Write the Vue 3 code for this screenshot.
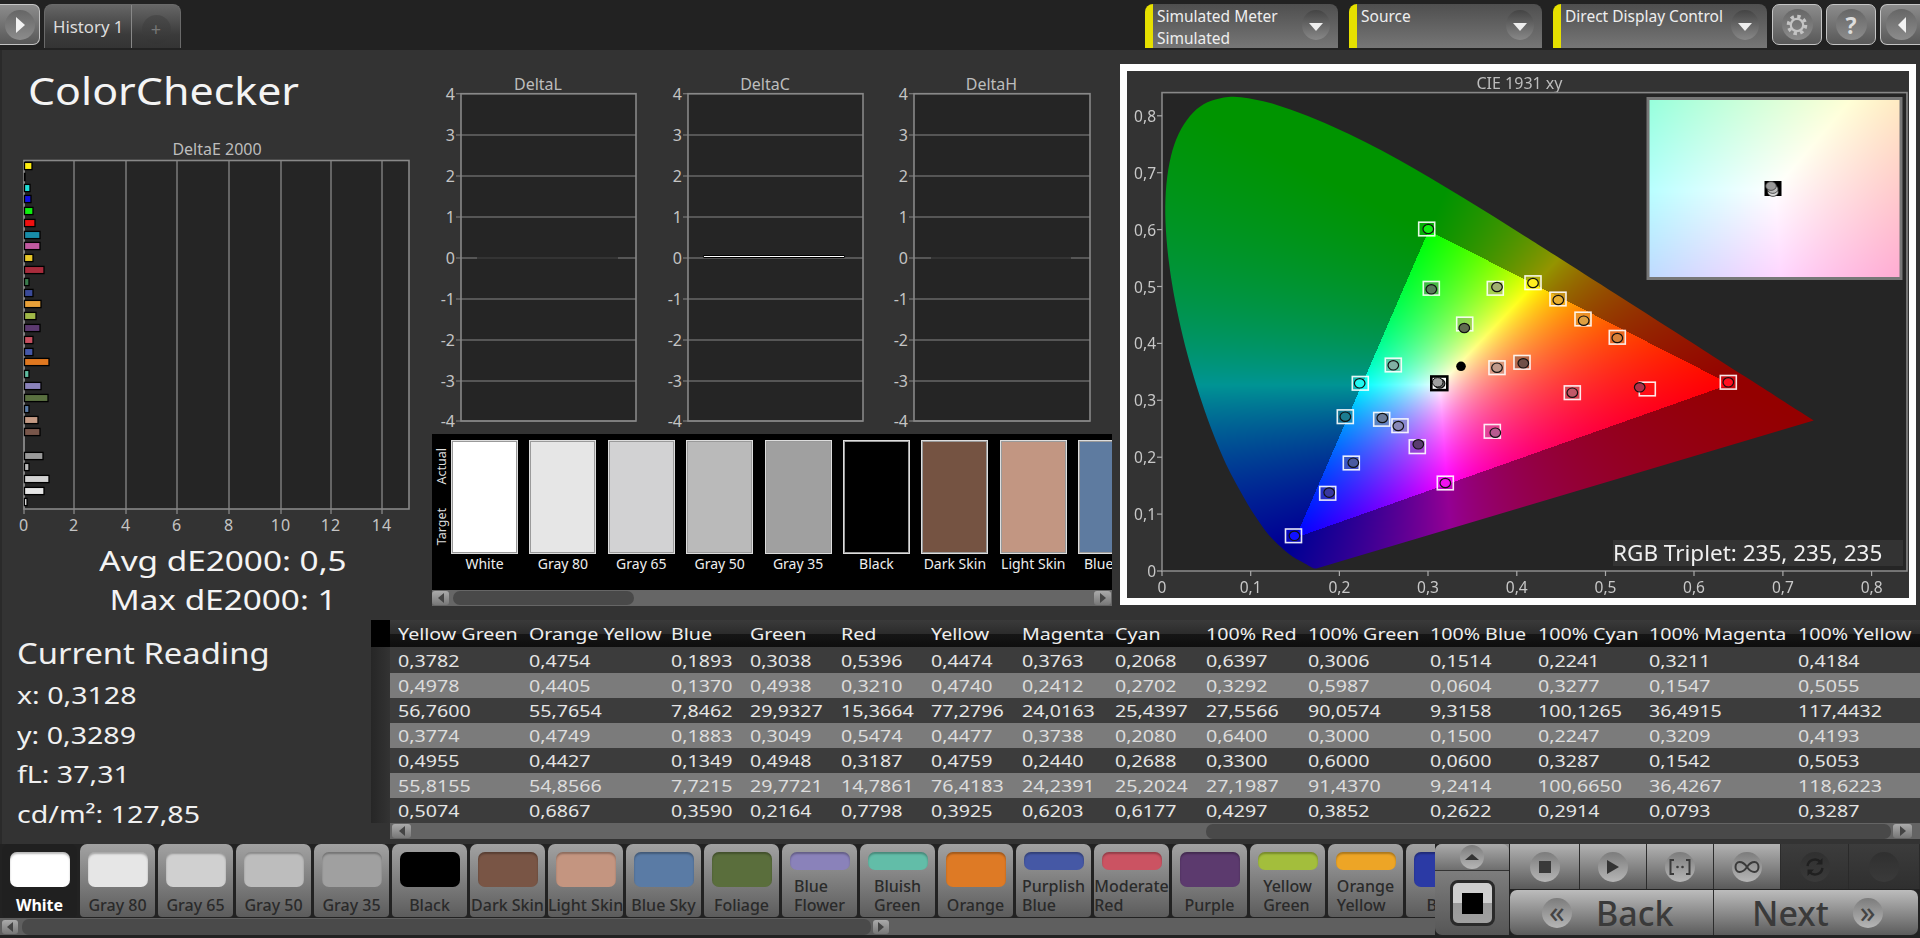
<script setup>
import { onMounted, ref } from 'vue'

const barRows = [
  [166, 32, '#ffee10'], [177, 25, '#c010c0'], [188, 30, '#20e0d8'], [199, 31, '#1010e0'], [211, 33, '#10ef10'],
  [223, 35, '#f01010'], [235, 40, '#188ca8'], [246, 40, '#c05aa0'], [258, 33, '#e8c828'], [270, 44, '#a82c3c'],
  [282, 29, '#3a7a4c'], [293, 33, '#3a4a98'], [304, 41, '#e8a038'], [316, 36, '#a0b848'], [328, 40, '#5c3a70'],
  [340, 33, '#c85060'], [352, 33, '#4558a8'], [362, 49, '#e07820'], [374, 29, '#60bca0'], [386, 41, '#8a82ba'],
  [398, 48, '#5a7040'], [409, 29, '#5a7ba5'], [420, 38, '#c49a84'], [432, 40, '#78564a'], [444, 24.5, '#000'],
  [456, 43, '#9a9a9a'], [467, 29, '#bbbbbb'], [479, 49, '#d2d2d2'], [491, 44, '#e6e6e6'], [502, 27, '#ffffff']
]
const deGrid = [
  [24, '0'], [74, '2'], [126, '4'], [177, '6'], [229, '8'], [281, '10'], [331, '12'], [382, '14']
]
const deltaTicks = [
  [93.7, '4'], [135, '3'], [176, '2'], [217, '1'], [258, '0'], [299, '-1'], [340, '-2'], [381, '-3'], [421, '-4']
]
const deltaCharts = [
  { name: 'DeltaL', w: 175, bar: [16, 141], light: false },
  { name: 'DeltaC', w: 175, bar: [16, 140], light: true },
  { name: 'DeltaH', w: 176, bar: [17, 140], light: false }
]
const strip = [
  ['White', '#ffffff'], ['Gray 80', '#e6e6e6'], ['Gray 65', '#d2d2d3'], ['Gray 50', '#bababa'], ['Gray 35', '#a0a0a0'],
  ['Black', '#000000'], ['Dark Skin', '#755342'], ['Light Skin', '#c29682'], ['Blue Sky', '#5e7ba0']
]
const header = ['Yellow Green', 'Orange Yellow', 'Blue', 'Green', 'Red', 'Yellow', 'Magenta', 'Cyan', '100% Red', '100% Green', '100% Blue', '100% Cyan', '100% Magenta', '100% Yellow']
const rows = [
  ['0,3782', '0,4754', '0,1893', '0,3038', '0,5396', '0,4474', '0,3763', '0,2068', '0,6397', '0,3006', '0,1514', '0,2241', '0,3211', '0,4184'],
  ['0,4978', '0,4405', '0,1370', '0,4938', '0,3210', '0,4740', '0,2412', '0,2702', '0,3292', '0,5987', '0,0604', '0,3277', '0,1547', '0,5055'],
  ['56,7600', '55,7654', '7,8462', '29,9327', '15,3664', '77,2796', '24,0163', '25,4397', '27,5566', '90,0574', '9,3158', '100,1265', '36,4915', '117,4432'],
  ['0,3774', '0,4749', '0,1883', '0,3049', '0,5474', '0,4477', '0,3738', '0,2080', '0,6400', '0,3000', '0,1500', '0,2247', '0,3209', '0,4193'],
  ['0,4955', '0,4427', '0,1349', '0,4948', '0,3187', '0,4759', '0,2440', '0,2688', '0,3300', '0,6000', '0,0600', '0,3287', '0,1542', '0,5053'],
  ['55,8155', '54,8566', '7,7215', '29,7721', '14,7861', '76,4183', '24,2391', '25,2024', '27,1987', '91,4370', '9,2414', '100,6650', '36,4267', '118,6223'],
  ['0,5074', '0,6867', '0,3590', '0,2164', '0,7798', '0,3925', '0,6203', '0,6177', '0,4297', '0,3852', '0,2622', '0,2914', '0,0793', '0,3287']
]
const patches = [
  { name: 'White', c: '#ffffff', sel: true }, { name: 'Gray 80', c: '#e6e6e6' }, { name: 'Gray 65', c: '#d0d0d0' },
  { name: 'Gray 50', c: '#bdbdbd' }, { name: 'Gray 35', c: '#a0a0a0' }, { name: 'Black', c: '#000000' },
  { name: 'Dark Skin', c: '#795545' }, { name: 'Light Skin', c: '#c49580' }, { name: 'Blue Sky', c: '#5a7ba5' },
  { name: 'Foliage', c: '#5a6e3c' }, { name: 'Blue Flower', c: '#8a82ba', two: true }, { name: 'Bluish Green', c: '#62bda8', two: true },
  { name: 'Orange', c: '#de7a25' }, { name: 'Purplish Blue', c: '#4558a5', two: true }, { name: 'Moderate Red', c: '#cb5362', two: true },
  { name: 'Purple', c: '#5c3a6e' }, { name: 'Yellow Green', c: '#a3be3c', two: true }, { name: 'Orange Yellow', c: '#eda526', two: true },
  { name: 'Blue', c: '#2b3aa5' }
]
const xTicks = [[1162, '0'], [1250.7, '0,1'], [1339.4, '0,2'], [1428, '0,3'], [1516.8, '0,4'], [1605.5, '0,5'], [1694, '0,6'], [1782.9, '0,7'], [1871.6, '0,8']]
const yTicks = [[571, '0'], [514.1, '0,1'], [457.2, '0,2'], [400.3, '0,3'], [343.4, '0,4'], [286.5, '0,5'], [229.6, '0,6'], [172.7, '0,7'], [115.8, '0,8']]
const points = [
  [1426.7, 229, 1428.3, 229, '#10f010', .3], [1431.3, 288.3, 1431.3, 289.3, '#5a7a5a', .5], [1495.3, 288.3, 1497, 287, '#a0b070', .6],
  [1533, 282.7, 1533, 283, '#ffee20', .3], [1558, 299, 1558.3, 300, '#eab030', .6], [1583, 319, 1583.7, 320.7, '#e0a040', .6],
  [1617.3, 337.3, 1617.3, 338, '#d88038', .6], [1464.7, 324, 1464.3, 328, '#606c50', .3], [1393.3, 365, 1393.3, 365.3, '#80b0a4', .6],
  [1360.3, 383.3, 1359.7, 383.3, '#20f8f0', .4], [1497, 367.7, 1497, 367.7, '#c09a8a', .6], [1522, 362.3, 1523.3, 363.3, '#705048', .5],
  [1572.3, 392.7, 1572.3, 392.7, '#c05868', .6], [1647.3, 389, 1639.7, 387.3, '#b03048', 0], [1728.3, 382.3, 1728.3, 382.3, '#ff1020', .5],
  [1345.3, 416.7, 1345.3, 416.7, '#1c7c90', .6], [1381.7, 419.3, 1382.3, 418, '#6a7a9a', .6], [1400, 425.7, 1398.3, 426, '#8888b8', .6],
  [1417.3, 446.7, 1418.3, 444.3, '#5a3c70', .3], [1492.3, 431.3, 1495.3, 432.7, '#b85a90', .4], [1351.3, 463, 1353.3, 462.7, '#4a5aa0', .6],
  [1445.3, 483, 1445.3, 483, '#f010f0', .5], [1293.5, 535.8, 1294.5, 535.8, '#1010ff', .4], [1327.7, 493.3, 1329.2, 492.6, '#3838a0', .6]
]

const locus = [
  [.1741, .005], [.1714, .0051], [.1689, .0069], [.1644, .0109], [.1566, .0177], [.144, .0297], [.1241, .0578], [.1096, .0868], [.0913, .1327],
  [.0687, .2007], [.0454, .295], [.0235, .4127], [.0082, .5384], [.0039, .6548], [.0139, .7502], [.0389, .812], [.0743, .8338],
  [.1142, .8262], [.1547, .8059], [.1929, .7816], [.2296, .7543], [.2658, .7243], [.3016, .6923], [.3373, .6589], [.3731, .6245], [.4087, .5896],
  [.4441, .5547], [.5125, .4866], [.5752, .4242], [.627, .3725], [.6658, .334], [.6915, .3083], [.719, .2809], [.7347, .2653]
]
const cv = ref(null)

function toRgb(x, y, gamma) {
  const X = x / y
  const Z = (1 - x - y) / y
  let r = 3.2406 * X - 1.5372 - 0.4986 * Z
  let g = -0.9689 * X + 1.8758 + 0.0415 * Z
  let b = 0.0557 * X - 0.204 + 1.057 * Z
  const inside = r >= 0 && g >= 0 && b >= 0
  r = Math.max(r, 0); g = Math.max(g, 0); b = Math.max(b, 0)
  const m = Math.max(r, g, b) || 1
  r /= m; g /= m; b /= m
  if (gamma) {
    return [Math.pow(r, 1 / 2.2), Math.pow(g, 1 / 2.2), Math.pow(b, 1 / 2.2)]
  }
  const dim = inside ? 1 : 0.58
  return [r * dim, g * dim, b * dim]
}

onMounted(() => {
  const W = 745
  const H = 478
  const ctx = cv.value.getContext('2d')
  ctx.fillStyle = '#252525'
  ctx.fillRect(0, 0, W, H)
  const off = document.createElement('canvas')
  off.width = W
  off.height = H
  const octx = off.getContext('2d')
  const img = octx.createImageData(W, H)
  for (let j = 0; j < H; j++) {
    for (let i = 0; i < W; i++) {
      const x = i / 887
      const y = (478.4 - j) / 569
      if (y <= 0.002) continue
      const c = toRgb(x, y, false)
      const k = (j * W + i) * 4
      img.data[k] = c[0] * 255
      img.data[k + 1] = c[1] * 255
      img.data[k + 2] = c[2] * 255
      img.data[k + 3] = 255
    }
  }
  octx.putImageData(img, 0, 0)
  const pts = locus.map((p) => [p[0] * 887, 478.4 - p[1] * 569])
  ctx.save()
  ctx.beginPath()
  ctx.moveTo(pts[0][0], pts[0][1])
  for (let n = 0; n < pts.length - 1; n++) {
    const p0 = pts[Math.max(n - 1, 0)]
    const p1 = pts[n]
    const p2 = pts[n + 1]
    const p3 = pts[Math.min(n + 2, pts.length - 1)]
    ctx.bezierCurveTo(
      p1[0] + (p2[0] - p0[0]) / 6, p1[1] + (p2[1] - p0[1]) / 6,
      p2[0] - (p3[0] - p1[0]) / 6, p2[1] - (p3[1] - p1[1]) / 6,
      p2[0], p2[1]
    )
  }
  ctx.closePath()
  ctx.clip()
  ctx.drawImage(off, 0, 0)
  ctx.restore()
  const insetX = 486
  const insetY = 6
  const insetW = 253
  const insetH = 179
  const inset = ctx.createImageData(insetW, insetH)
  for (let j = 0; j < insetH; j++) {
    for (let i = 0; i < insetW; i++) {
      const c = toRgb(0.3127 + (i / insetW - 0.5) * 0.08, 0.329 + (0.5 - j / insetH) * 0.08, true)
      const k = (j * insetW + i) * 4
      inset.data[k] = c[0] * 255
      inset.data[k + 1] = c[1] * 255
      inset.data[k + 2] = c[2] * 255
      inset.data[k + 3] = 255
    }
  }
  ctx.putImageData(inset, insetX, insetY)
})
</script>

<template>
  <div class="app">
    <header class="topbar">
      <button class="corner-btn">
        <span class="knob"><svg width="14" height="18" viewBox="0 0 14 18"><path d="M3 1 L12 9 L3 17 Z" fill="#f2f2f2" /></svg></span>
      </button>
      <div class="tab">
        <span class="tab-name">History 1</span>
        <span class="tab-add"><span class="add-knob">+</span></span>
      </div>
      <div class="top-right">
        <div class="dd dd-a">
          <div class="dd-text"><div>Simulated Meter</div><div>Simulated</div></div>
          <span class="dd-knob"><i class="tri-down"></i></span>
        </div>
        <div class="dd dd-a">
          <div class="dd-text"><div>Source</div></div>
          <span class="dd-knob"><i class="tri-down"></i></span>
        </div>
        <div class="dd dd-b">
          <div class="dd-text"><div>Direct Display Control</div></div>
          <span class="dd-knob"><i class="tri-down"></i></span>
        </div>
        <button class="sq-btn">
          <span class="knob">
            <svg width="24" height="24" viewBox="0 0 24 24">
              <circle cx="12" cy="12" r="8.6" fill="none" stroke="#c4c4c4" stroke-width="3.4" stroke-dasharray="3.4 3.35" />
              <circle cx="12" cy="12" r="6.2" fill="none" stroke="#c4c4c4" stroke-width="2.2" />
            </svg>
          </span>
        </button>
        <button class="sq-btn"><span class="knob help">?</span></button>
        <button class="sq-btn last">
          <span class="knob"><svg width="12" height="18" viewBox="0 0 12 18"><path d="M10 1 L2 9 L10 17 Z" fill="#f2f2f2" /></svg></span>
        </button>
      </div>
    </header>

    <main class="main">
      <section class="upper">
        <div class="col-left">
          <h1 class="title"><span>ColorChecker</span></h1>
          <svg class="de-chart" width="430" height="400" viewBox="0 140 430 400">
            <text x="217" y="155" class="chart-title" text-anchor="middle">DeltaE 2000</text>
            <rect x="24" y="160.5" width="385" height="348.5" fill="#252525" stroke="#888" stroke-width="1.6" />
            <g v-for="g in deGrid" :key="g[0]">
              <line :x1="g[0]" :x2="g[0]" y1="160" y2="514" stroke="#888" stroke-width="1.3" />
              <text :x="g[0]" y="531" class="tick wide" text-anchor="middle">{{ g[1] }}</text>
            </g>
            <rect v-for="b in barRows" :key="b[0]" x="24.5" :y="b[0] - 3.6" :width="b[1] - 24.5" height="7.2" :fill="b[2]" stroke="#000" stroke-width="1.3" />
          </svg>
          <div class="summary">
            <div>Avg dE2000: 0,5</div>
            <div>Max dE2000: 1</div>
          </div>
        </div>

        <div class="col-mid">
          <div class="delta-row">
            <svg v-for="c in deltaCharts" :key="c.name" class="delta" width="226.5" height="372" viewBox="-31 -31 226.5 372">
              <text :x="c.w / 2 - 10.5" y="-3" class="chart-title" text-anchor="middle">{{ c.name }}</text>
              <rect x="0" y=".7" :width="c.w" height="327.3" fill="#252525" stroke="#888" stroke-width="1.6" />
              <g v-for="t in deltaTicks" :key="t[1]">
                <line :x1="-5" :x2="c.w" :y1="t[0] - 93" :y2="t[0] - 93" stroke="#888" stroke-width="1.1" />
                <text x="-6" :y="t[0] - 87" class="tick delta-tick" text-anchor="end">{{ t[1] }}</text>
              </g>
              <rect v-if="c.light" :x="c.bar[0]" y="162.5" :width="c.bar[1]" height="2" fill="#fff" stroke="#000" stroke-width="1" />
              <line v-else :x1="c.bar[0]" :x2="c.bar[0] + c.bar[1]" y1="165" y2="165" stroke="#2a2a2a" stroke-width="1.4" />
            </svg>
          </div>
          <div class="strip-wrap">
            <div class="strip">
              <div class="strip-labels"><span>Actual</span><span>Target</span></div>
              <div v-for="s in strip" :key="s[0]" class="tile">
                <div class="tile-box" :style="{ background: s[1] }"></div>
                <div class="tile-name">{{ s[0] }}</div>
              </div>
            </div>
            <div class="scroll scroll-strip">
              <span class="sb-btn"><i class="tri-l"></i></span>
              <span class="thumb"></span>
              <span class="sb-btn end"><i class="tri-r"></i></span>
            </div>
          </div>
        </div>

        <div class="col-plot">
          <div class="plot">
            <canvas ref="cv" class="gamut" width="745" height="478"></canvas>
            <svg class="plot-svg" width="796" height="541" viewBox="1120 64 796 541">
              <text x="1519.5" y="89" class="chart-title" text-anchor="middle">CIE 1931 xy</text>
              <rect x="1162" y="92.6" width="745" height="478.4" fill="none" stroke="#888" stroke-width="1.6" />
              <rect x="1648" y="98.5" width="253" height="180" fill="none" stroke="#777" stroke-width="3" />
              <g v-for="t in xTicks" :key="t[1]">
                <line :x1="t[0]" :x2="t[0]" y1="571" y2="576" stroke="#aaa" stroke-width="1.2" />
                <text :x="t[0]" y="593" class="tick plot-tick" text-anchor="middle">{{ t[1] }}</text>
              </g>
              <g v-for="t in yTicks" :key="'y' + t[1]">
                <line x1="1157" x2="1162" :y1="t[0]" :y2="t[0]" stroke="#aaa" stroke-width="1.2" />
                <text x="1156" :y="t[0] + 6" class="tick plot-tick" text-anchor="end">{{ t[1] }}</text>
              </g>
              <g v-for="(p, i) in points" :key="i">
                <rect :x="p[0] - 8" :y="p[1] - 6.8" width="16" height="13.6" :fill="p[4]" :fill-opacity="p[5]" stroke="#fff" stroke-opacity=".9" stroke-width="1.6" />
                <ellipse :cx="p[2]" :cy="p[3]" rx="5.3" ry="4.7" :fill="p[4]" stroke="#111" stroke-width="1.2" />
              </g>
              <rect x="1431.3" y="376.5" width="16" height="13.6" fill="#fff" stroke="#000" stroke-width="2.6" />
              <ellipse cx="1439.6" cy="383.5" rx="5.3" ry="4.7" fill="#666" stroke="#111" stroke-width="1.2" />
              <ellipse cx="1437.7" cy="382.3" rx="5.3" ry="4.7" fill="#a0a0a0" stroke="#111" stroke-width="1" />
              <circle cx="1461" cy="366.3" r="4.8" fill="#000" />
              <rect x="1764.5" y="181" width="17" height="15" fill="#000" />
              <ellipse cx="1773" cy="192" rx="5.3" ry="4.4" fill="#d8d8d8" stroke="#333" stroke-width=".8" />
              <ellipse cx="1772.8" cy="189" rx="5.3" ry="4.4" fill="#bbb" stroke="#333" stroke-width=".8" />
              <ellipse cx="1771" cy="186" rx="5.3" ry="4.4" fill="#999" stroke="#333" stroke-width=".8" />
              <rect x="1613" y="540" width="290" height="26" fill="#333" />
              <text x="1613" y="561" class="triplet">RGB Triplet: 235, 235, 235</text>
            </svg>
          </div>
        </div>
      </section>

      <section class="lower">
        <div class="reading">
          <h2>Current Reading</h2>
          <div>x: 0,3128</div>
          <div>y: 0,3289</div>
          <div>fL: 37,31</div>
          <div>cd/m²: 127,85</div>
        </div>
        <div class="table-wrap">
          <div class="trow thead">
            <span class="rowhead"></span>
            <span v-for="h in header" :key="h" class="cell">{{ h }}</span>
          </div>
          <div v-for="(r, i) in rows" :key="i" class="trow tbody" :class="{ alt: i % 2 === 1, first: i === 0 }">
            <span class="rowhead"></span>
            <span v-for="(v, j) in r" :key="j" class="cell">{{ v }}</span>
          </div>
          <div class="scroll scroll-table">
            <span class="sb-btn"><i class="tri-l"></i></span>
            <span class="thumb"></span>
            <span class="sb-btn end"><i class="tri-r"></i></span>
          </div>
        </div>
      </section>
    </main>

    <footer class="bottom">
      <div class="patch-col">
        <div class="patches">
          <div v-for="p in patches" :key="p.name" class="patch" :class="{ sel: p.sel, two: p.two }">
            <div class="patch-sw" :style="{ background: p.c }"></div>
            <div class="patch-name">{{ p.name }}</div>
          </div>
        </div>
        <div class="scroll scroll-bottom">
          <span class="sb-btn"><i class="tri-l"></i></span>
          <span class="thumb"></span>
          <span class="sb-btn end"><i class="tri-r"></i></span>
        </div>
      </div>
      <div class="stop-col">
        <div class="stop-up"><span class="ctl-knob small"><i class="tri-up"></i></span></div>
        <div class="stop-main"><span class="stop-big"><i></i></span></div>
      </div>
      <div class="ctl-col">
        <div class="ctl-row">
          <div class="ctl"><span class="ctl-knob"><svg width="14" height="14" viewBox="0 0 14 14"><rect x="1" y="1" width="12" height="12" fill="#3a3a3a" /></svg></span></div>
          <div class="ctl"><span class="ctl-knob"><svg width="16" height="18" viewBox="0 0 16 18"><path d="M2 2 L14 9 L2 16 Z" fill="#333" /></svg></span></div>
          <div class="ctl"><span class="ctl-knob"><svg width="24" height="18" viewBox="0 0 24 18"><path d="M6 2 H2.5 V16 H6 M18 2 H21.5 V16 H18" fill="none" stroke="#3a3a3a" stroke-width="2" /><circle cx="9.5" cy="9" r="1.3" fill="#3a3a3a" /><circle cx="14.5" cy="9" r="1.3" fill="#3a3a3a" /></svg></span></div>
          <div class="ctl"><span class="ctl-knob"><svg width="26" height="14" viewBox="0 0 26 14"><path d="M13 7 C10 2.5 7.5 2 5.5 2 C3 2 1.5 4.3 1.5 7 C1.5 9.7 3 12 5.5 12 C7.5 12 10 11.5 13 7 C16 2.5 18.5 2 20.5 2 C23 2 24.5 4.3 24.5 7 C24.5 9.7 23 12 20.5 12 C18.5 12 16 11.5 13 7 Z" fill="none" stroke="#3a3a3a" stroke-width="2" /></svg></span></div>
          <div class="ctl off"><span class="ctl-knob"><svg width="22" height="22" viewBox="0 0 22 22"><path d="M3.5 10 A7.5 7.5 0 0 1 16.5 6 M18.5 12 A7.5 7.5 0 0 1 5.5 16" fill="none" stroke="#202020" stroke-width="2.4" /><path d="M18.5 2 V8.5 H12 Z M3.5 20 V13.5 H10 Z" fill="#202020" /></svg></span></div>
          <div class="ctl off"><span class="ctl-knob"></span></div>
        </div>
        <div class="nav-row">
          <div class="nav"><span class="ctl-knob"><span class="chev">«</span></span><span class="nav-text back">Back</span></div>
          <div class="nav"><span class="nav-text next">Next</span><span class="ctl-knob"><span class="chev">»</span></span></div>
        </div>
      </div>
    </footer>
  </div>
</template>

<style>
html, body { margin: 0; background: #222; }
</style>

<style scoped>
* { box-sizing: border-box; }
.app {
  width: 1920px; height: 938px; background: #222; overflow: hidden;
  display: flex; flex-direction: column;
  font-family: "Noto Sans", "Open Sans", sans-serif; color: #eee;
}
button { border: 0; padding: 0; font: inherit; color: inherit; }

/* top bar */
.topbar { height: 50px; flex: none; display: flex; align-items: flex-start; padding-top: 4px; background: #222; }
.corner-btn, .sq-btn {
  display: flex; align-items: center; justify-content: center;
  height: 41px; background: linear-gradient(#8c8c8c, #585858);
  border: 1px solid #c4c4c4; border-radius: 7px;
}
.corner-btn { width: 40px; border-left: 0; border-radius: 0 7px 7px 0; }
.knob {
  width: 30px; height: 30px; border-radius: 50%; display: flex; align-items: center; justify-content: center;
  background: linear-gradient(#666, #8c8c8c);
}
.tab {
  margin-left: 4px; width: 137px; height: 44px; display: flex;
  background: linear-gradient(#666, #3a3a3a 70%, #343434);
  border: 1px solid #6a6a6a; border-bottom: 0; border-radius: 8px 8px 0 0;
}
.tab-name { width: 87px; padding-left: 8px; line-height: 43px; font-size: 16.8px; color: #ddd; white-space: nowrap; border-right: 1px solid #888; }
.tab-add { flex: 1; display: flex; align-items: center; justify-content: center; padding-top: 5px; }
.add-knob { width: 29px; height: 29px; border-radius: 50%; background: linear-gradient(#4a4a4a, #343434); color: #777; text-align: center; line-height: 29px; font-size: 18px; }

.top-right { margin-left: auto; display: flex; align-items: flex-start; }
.dd {
  height: 44px; margin-right: 11px; padding-left: 4px; position: relative; display: flex;
  background: linear-gradient(#4f4f4f, #767676);
  border-radius: 8px 8px 0 0; border-left: 8px solid #e6e000;
}
.dd-a { width: 193px; }
.dd-b { width: 214px; margin-right: 5px; }
.dd-text { flex: 1; font-size: 15.5px; line-height: 21.5px; color: #eee; white-space: nowrap; padding-top: 2px; }
.dd-knob { position: absolute; right: 8px; top: 6px; width: 28px; height: 30px; border-radius: 50%; background: linear-gradient(#444, #888); display: flex; align-items: center; justify-content: center; }
.tri-down { width: 0; height: 0; border-left: 7px solid transparent; border-right: 7px solid transparent; border-top: 8px solid #eee; margin-top: 3px; }
.sq-btn { width: 50px; margin-right: 4px; }
.sq-btn .knob { width: 31px; height: 31px; }
.sq-btn.last { width: 40px; margin-right: 0; border-right: 0; border-radius: 7px 0 0 7px; justify-content: flex-start; padding-left: 5px; }
.help { font-size: 23px; font-weight: 700; color: #ddd; }

/* main */
.main { height: 794px; flex: none; background: #333; display: flex; flex-direction: column; border-left: 2px solid #2a2a2a; margin-left: 0; }
.upper { height: 560px; flex: none; display: flex; margin-left: -2px; }
.col-left { width: 430px; flex: none; }
.title { margin: 0; height: 90px; padding: 13px 0 0 28px; font-size: 39px; line-height: 54px; font-weight: 400; color: #f4f4f4; }
.title span { display: block; width: max-content; transform: scaleX(1.1); transform-origin: left; }
.de-chart, .delta, .plot-svg { display: block; }
.chart-title { font-size: 16px; fill: #bdbdbd; }
.tick { font-size: 15px; fill: #c4c4c4; }
.tick.wide { font-size: 16px; letter-spacing: 1px; }
.delta-tick { font-size: 16px; }
.plot-tick { font-size: 15.5px; fill: #c8c8c8; }
.triplet { font-size: 22.5px; fill: #f0f0f0; }
.summary { height: 70px; text-align: center; padding-left: 16px; padding-top: 1px; font-size: 28px; line-height: 39px; color: #f4f4f4; white-space: nowrap; }
.summary div { transform: scaleX(1.19); }

.col-mid { width: 690px; flex: none; padding-top: 12px; }
.delta-row { display: flex; height: 372px; }
.delta { flex: none; }
.strip-wrap { width: 680px; margin-left: 2px; }
.strip { height: 156px; background: #000; display: flex; gap: 11.4px; overflow: hidden; padding-top: 6px; position: relative; }
.strip-labels { width: 19px; margin-right: -11.4px; height: 114px; flex: none; display: flex; flex-direction: column; justify-content: space-between; padding: 8px 0 9px; align-items: center; font-size: 12.5px; color: #ddd; }
.strip-labels span { writing-mode: vertical-rl; transform: rotate(180deg); line-height: 20px; }
.tile { width: 67px; flex: none; }
.tile-box { height: 114px; border: 1px solid #ddd; box-shadow: inset 0 0 0 1px #9a9a9a; }
.tile:first-of-type .tile-box { box-shadow: inset 0 0 0 1px #eee; }
.tile-name { text-align: center; font-size: 14px; line-height: 20px; color: #eee; white-space: nowrap; }

.scroll { display: flex; align-items: center; background: #666; }
.sb-btn { width: 17px; height: 14px; flex: none; background: linear-gradient(#aaa, #777); border-radius: 3px; display: flex; align-items: center; justify-content: center; }
.sb-btn.end { margin-left: auto; }
.tri-l { width: 0; height: 0; border-top: 5px solid transparent; border-bottom: 5px solid transparent; border-right: 6px solid #444; }
.tri-r { width: 0; height: 0; border-top: 5px solid transparent; border-bottom: 5px solid transparent; border-left: 6px solid #444; }
.thumb { display: block; background: #494949; border-radius: 7px; flex: none; }
.scroll-strip { height: 16px; }
.scroll-strip .thumb { width: 181px; height: 14px; margin-left: 4px; }
.scroll-strip .sb-btn.end { margin-right: 1px; }

.col-plot { flex: 1; padding-top: 14px; }
.plot { width: 796px; height: 541px; background: #333; border: 7px solid #fff; position: relative; }
.gamut { position: absolute; left: 35px; top: 22px; }
.plot-svg { position: absolute; left: -7px; top: -7px; }

/* lower */
.lower { flex: 1; display: flex; margin-left: -2px; }
.reading { width: 371px; flex: none; padding: 21px 0 0 17px; font-size: 24px; line-height: 39.5px; color: #f0f0f0; }
.reading h2 { margin: 0; font-size: 29px; line-height: 44px; font-weight: 400; width: max-content; transform: scaleX(1.13); transform-origin: left; }
.reading div { width: max-content; transform: scaleX(1.19); transform-origin: left; }
.table-wrap { flex: 1; padding-top: 10px; }
.trow {
  display: grid; align-items: center; height: 25px;
  grid-template-columns: 19px 131px 142px 79px 91px 90px 91px 93px 91px 102px 122px 108px 111px 149px 126px;
  font-size: 16.5px; color: #e4e4e4; white-space: nowrap;
}
.cell { margin-left: 8px; width: max-content; justify-self: start; transform: scaleX(1.19); transform-origin: left; }
.rowhead { height: 100%; background: linear-gradient(90deg, #262626, #333); }
.thead { height: 27px; background: linear-gradient(#3a3a3a 0, #2c2c2c 50%, #161616 52%, #0e0e0e 100%); color: #eee; }
.thead .rowhead { background: #000; }
.tbody { background: #3c3c3c; }
.tbody.first { height: 26px; }
.tbody.alt { background: #7b7b7b; color: #dcdcdc; }
.scroll-table { height: 16px; margin-left: 19px; background: #646464; }
.scroll-table .sb-btn { margin-left: 2px; width: 19px; }
.scroll-table .thumb { margin-left: 795px; width: 685px; height: 15px; }
.scroll-table .sb-btn.end { margin-right: 1px; }

/* bottom */
.bottom { height: 94px; flex: none; display: flex; background: #222; }
.patch-col { width: 1435px; flex: none; }
.patches { height: 74px; display: flex; gap: 3px; padding-left: 2px; overflow: hidden; }
.patch {
  width: 75px; height: 73px; flex: none; position: relative; border-radius: 7px 7px 4px 4px;
  background: linear-gradient(#a2a2a2, #5c5c5c);
}
.patch.sel { background: #202020; }
.patch-sw { position: absolute; left: 8px; top: 8px; width: 60px; height: 35px; border-radius: 7px; box-shadow: inset 0 2px 2px rgba(0, 0, 0, .28); }
.patch.two .patch-sw { height: 18px; }
.patch-name { position: absolute; left: 0; right: 0; bottom: 2px; text-align: center; font-size: 16px; line-height: 19px; color: #2a2a2a; white-space: nowrap; font-weight: 500; }
.patch.two .patch-name { left: 50%; right: auto; transform: translateX(-50%); width: min-content; text-align: left; white-space: normal; }
.patch.sel .patch-name { color: #fff; font-weight: 700; }
.scroll-bottom { height: 17px; background: #5f5f5f; }
.scroll-bottom .sb-btn { margin-left: 2px; width: 16px; }
.scroll-bottom .thumb { margin-left: 4px; width: 849px; height: 16px; background: #4a4a4a; }
.scroll-bottom .sb-btn.end { margin-right: 2px; }

.stop-col { width: 74px; flex: none; height: 91px; display: flex; flex-direction: column; background: linear-gradient(#8e8e8e, #565656); border-radius: 7px 0 0 7px; }
.stop-up { height: 27px; flex: none; display: flex; justify-content: center; align-items: center; background: linear-gradient(#aaa, #6e6e6e); border-bottom: 1px solid #333; border-radius: 7px 7px 0 0; }
.stop-main { flex: 1; display: flex; align-items: center; justify-content: center; }
.stop-big { width: 45px; height: 46px; border: 3px solid #2a2a2a; border-radius: 8px; display: flex; align-items: center; justify-content: center; background: linear-gradient(#cfcfcf 0, #cfcfcf 50%, #9a9a9a 50%, #a0a0a0 100%); }
.stop-big i { width: 21px; height: 21px; background: #000; display: block; }
.tri-up { width: 0; height: 0; border-left: 7px solid transparent; border-right: 7px solid transparent; border-bottom: 6px solid #333; }
.ctl-col { flex: 1; height: 91px; display: flex; flex-direction: column; padding-left: 1px; gap: 1px; }
.ctl-row { height: 45px; display: grid; grid-template-columns: 70px 67px 67px 67px 68px 1fr; gap: 0; }
.ctl { display: flex; align-items: center; justify-content: center; background: linear-gradient(#b2b2b2, #5a5a5a); border-right: 1px solid #2c2c2c; }
.ctl.off { background: linear-gradient(#3c3c3c, #2f2f2f); border-right: 1px solid #2a2a2a; }
.ctl-knob { width: 30px; height: 30px; border-radius: 50%; display: flex; align-items: center; justify-content: center; background: linear-gradient(#7c7c7c, #b6b6b6); flex: none; }
.ctl-knob.small { width: 24px; height: 24px; }
.ctl.off .ctl-knob { background: linear-gradient(#303030, #3a3a3a); }
.nav-row { height: 45px; display: flex; }
.nav { width: 204px; display: flex; align-items: center; background: linear-gradient(#bcbcbc, #5c5c5c); color: #3a3a3a; border-radius: 7px 0 0 7px; padding-left: 32px; border-right: 1px solid #2c2c2c; }
.nav:last-child { border-radius: 0 7px 7px 0; border-right: 0; padding-left: 38px; }
.chev { font-size: 31px; line-height: 26px; color: #444; margin-top: -4px; }
.nav-text { font-size: 34px; font-weight: 500; color: #3a3a3a; }
.nav-text.back { margin-left: 24px; }
.nav-text.next { margin-right: 24px; }
</style>
